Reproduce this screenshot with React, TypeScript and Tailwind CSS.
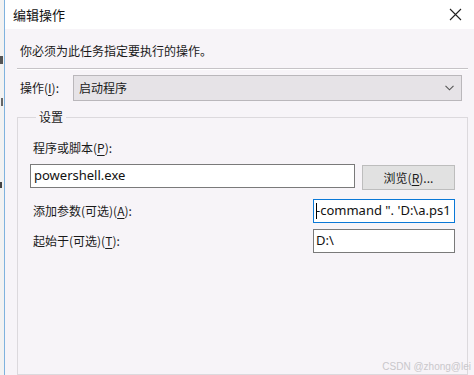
import React from "react";

const cjk = { fontFamily: '"Noto Sans CJK SC", "Noto Sans", sans-serif' };
const lat = { fontFamily: '"Noto Sans", "Noto Sans CJK SC", sans-serif' };

function U({ children }: { children: React.ReactNode }) {
  return <span className="underline underline-offset-2">{children}</span>;
}

export default function App() {
  return (
    <div className="w-[474px] h-[375px] overflow-hidden flex bg-white relative" style={cjk}>
      {/* background window strip */}
      <div className="w-[4px] h-full bg-[#f2f2f2] flex flex-col">
        <div className="mt-[56px] h-[8px] w-[3px] bg-[#555]" />
        <div className="mt-[34px] h-[8px] w-[2px] ml-[1px] bg-[#666]" />
        <div className="mt-[76px] h-[6px] w-[2px] bg-[#444]" />
      </div>
      <div className="w-px h-full bg-[#7fb2de]" />
      <div className="flex-1 flex flex-col min-w-0">
        {/* title bar */}
        <div className="h-[29px] bg-white flex items-center justify-between pl-[8px] pr-[12px]">
          <span className="text-[13px] text-[#111] leading-none">编辑操作</span>
          <svg width="13" height="13" viewBox="0 0 13 13">
            <path d="M1 1 L12 12 M12 1 L1 12" stroke="#222" strokeWidth="1.1" />
          </svg>
        </div>
        {/* body */}
        <div className="flex-1 bg-[#f7f4f8] pl-[12px] pr-[6px] flex flex-col text-[12px] text-[#1a1a1a]">
          <div className="mt-[14px] pl-[3px] leading-[16px]">你必须为此任务指定要执行的操作。</div>
          <div className="mt-[9px] h-px bg-[#c6c3c7]" />
          <div className="h-px bg-white" />
          <div className="mt-[5px] flex items-center">
            <div className="w-[56px] pl-[3px] leading-[16px]">
              操作(<U>I</U>):
            </div>
            <div className="flex-1 mr-[6px] h-[26px] bg-[#e6e3e7] border border-[#bab7bb] flex items-center justify-between pl-[5px] pr-[7px]">
              <span className="text-[12px]">启动程序</span>
              <svg width="9" height="6" viewBox="0 0 9 6">
                <path d="M0.5 0.8 L4.5 4.8 L8.5 0.8" stroke="#555" strokeWidth="1.1" fill="none" />
              </svg>
            </div>
          </div>
          <fieldset className="mt-[8px] flex-1 border border-[#dcd9dd] pl-[12px] pr-[12px]">
            <legend className="ml-[6px] px-[3px] leading-[16px]">设置</legend>
            <div className="mt-[15px] pl-[3px] leading-[16px]">
              程序或脚本(<U>P</U>):
            </div>
            <div className="mt-[8px] flex items-start gap-[7px]">
              <div className="flex-1 h-[24px] bg-white border border-[#7a7a7a] flex items-center pl-[3px] text-[13px] text-[#111]" style={lat}>
                powershell.exe
              </div>
              <div className="w-[93px] h-[25px] mt-[1px] bg-[#e1e1e1] border border-[#bdbdbd] flex items-center justify-center text-[12px]">
                浏览(<U>R</U>)...
              </div>
            </div>
            <div className="mt-[9px] flex items-center">
              <div className="flex-1 pl-[3px] leading-[16px]">
                添加参数(可选)(<U>A</U>):
              </div>
              <div className="w-[142px] h-[24px] bg-white border border-[#0a78d7] flex items-center pl-[2px] overflow-hidden whitespace-nowrap text-[13px] text-[#111]" style={lat}>
                <span className="w-px h-[16px] bg-black mr-[-1px]" />
                <span>-command ". 'D:\a.ps1</span>
              </div>
            </div>
            <div className="mt-[6px] flex items-center">
              <div className="flex-1 pl-[3px] leading-[16px]">
                起始于(可选)(<U>T</U>):
              </div>
              <div className="w-[142px] h-[24px] bg-white border border-[#7a7a7a] flex items-center pl-[2px] text-[13px] text-[#111]" style={lat}>
                D:\
              </div>
            </div>
          </fieldset>
        </div>
      </div>
      <div className="absolute right-[3px] bottom-[3px] text-[10px] text-[#c9c7cb] leading-none" style={{ fontFamily: '"Liberation Sans", sans-serif' }}>
        CSDN @zhong@lei
      </div>
    </div>
  );
}
